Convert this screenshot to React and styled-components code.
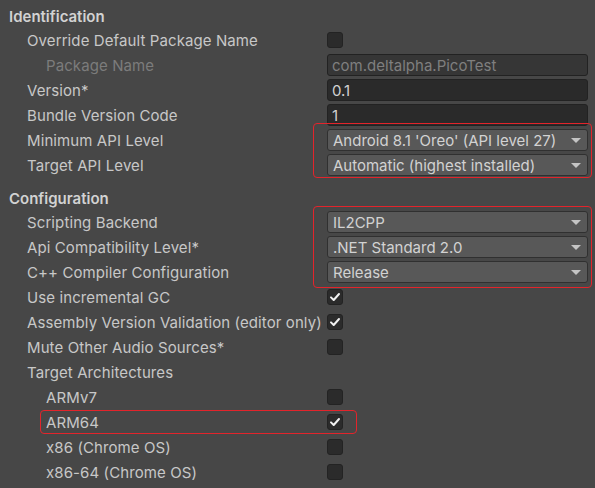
import styled, { createGlobalStyle } from "styled-components";

const GlobalStyle = createGlobalStyle`
  html, body {
    margin: 0;
    padding: 0;
    background: #474747;
  }
  body {
    font-family: Inter, "Noto Sans", "Liberation Sans", sans-serif;
    font-size: 15px;
    color: #c8c8c8;
  }
`;

const Page = styled.div`
  width: 595px;
  height: 488px;
  box-sizing: border-box;
  padding: 4px 7px 0 9px;
  overflow: hidden;
  display: flex;
  flex-direction: column;
  gap: 10px;
`;

const Section = styled.section`
  display: flex;
  flex-direction: column;
  gap: 3px;
`;

const Header = styled.div`
  height: 22px;
  box-sizing: border-box;
  padding-top: 2px;
  display: flex;
  align-items: center;
  font-weight: 600;
  color: #d2d2d2;
`;

const Row = styled.div`
  height: 22px;
  display: grid;
  grid-template-columns: 318px 1fr;
  align-items: center;
`;

const Label = styled.div`
  padding-left: ${(p) => 18 + (p.$level || 0) * 19}px;
  color: ${(p) => (p.$disabled ? "#7c7c7c" : "#c8c8c8")};
  letter-spacing: 0.1px;
  white-space: nowrap;
`;

const Group = styled.div`
  position: relative;
  display: flex;
  flex-direction: column;
  gap: 3px;

  &::after {
    content: "";
    position: absolute;
    pointer-events: none;
    left: ${(p) => p.$left}px;
    right: ${(p) => p.$right}px;
    top: ${(p) => p.$top}px;
    bottom: ${(p) => p.$bottom}px;
    border: 1px solid #e3242b;
    border-radius: 4px;
  }
`;

const Field = styled.div`
  height: 22px;
  box-sizing: border-box;
  border: 1px solid #222;
  border-radius: 3px;
  background: ${(p) => (p.$disabled ? "#363636" : "#2a2a2a")};
  color: ${(p) => (p.$disabled ? "#7f7f7f" : "#d2d2d2")};
  padding: 0 4px;
  display: flex;
  align-items: center;
`;

const Select = styled.div`
  height: 22px;
  box-sizing: border-box;
  border: 1px solid #303030;
  border-radius: 3px;
  background: #585858;
  color: #d2d2d2;
  padding: 0 5px 0 5px;
  display: flex;
  align-items: center;
  justify-content: space-between;
`;

const Arrow = styled.span`
  width: 0;
  height: 0;
  margin-right: 1px;
  border-left: 5px solid transparent;
  border-right: 5px solid transparent;
  border-top: 5px solid #c4c4c4;
`;

const Box = styled.div`
  width: 16px;
  height: 16px;
  box-sizing: border-box;
  border: 1px solid #232323;
  border-radius: 3px;
  background: #2b2b2b;
  display: flex;
  align-items: center;
  justify-content: center;
`;

const Check = ({ on }) => (
  <Box>
    {on && (
      <svg width="12" height="12" viewBox="0 0 12 12">
        <path
          d="M2 6.4 L4.7 9 L10 3"
          fill="none"
          stroke="#f0f0f0"
          strokeWidth="2"
          strokeLinecap="round"
          strokeLinejoin="round"
        />
      </svg>
    )}
  </Box>
);

const Dropdown = ({ value }) => (
  <Select>
    <span>{value}</span>
    <Arrow />
  </Select>
);

const CheckRow = ({ label, on, level }) => (
  <Row>
    <Label $level={level}>{label}</Label>
    <Check on={on} />
  </Row>
);

export default function App() {
  return (
    <>
      <GlobalStyle />
      <Page>
        <Section>
          <Header>Identification</Header>
          <CheckRow label="Override Default Package Name" />
          <Row>
            <Label $level={1} $disabled>
              Package Name
            </Label>
            <Field $disabled>com.deltalpha.PicoTest</Field>
          </Row>
          <Row>
            <Label>Version*</Label>
            <Field>0.1</Field>
          </Row>
          <Row>
            <Label>Bundle Version Code</Label>
            <Field>1</Field>
          </Row>
          <Group $left={304} $right={-4} $top={-6} $bottom={-2}>
            <Row>
              <Label>Minimum API Level</Label>
              <Dropdown value="Android 8.1 'Oreo' (API level 27)" />
            </Row>
            <Row>
              <Label>Target API Level</Label>
              <Dropdown value="Automatic (highest installed)" />
            </Row>
          </Group>
        </Section>
        <Section>
          <Header>Configuration</Header>
          <Group $left={304} $right={-4} $top={-5} $bottom={-5}>
            <Row>
              <Label>Scripting Backend</Label>
              <Dropdown value="IL2CPP" />
            </Row>
            <Row>
              <Label>Api Compatibility Level*</Label>
              <Dropdown value=".NET Standard 2.0" />
            </Row>
            <Row>
              <Label>C++ Compiler Configuration</Label>
              <Dropdown value="Release" />
            </Row>
          </Group>
          <CheckRow label="Use incremental GC" on />
          <CheckRow label="Assembly Version Validation (editor only)" on />
          <CheckRow label="Mute Other Audio Sources*" />
          <Row>
            <Label>Target Architectures</Label>
          </Row>
          <CheckRow label="ARMv7" level={1} />
          <Group $left={31} $right={231} $top={-1} $bottom={-1}>
            <CheckRow label="ARM64" level={1} on />
          </Group>
          <CheckRow label="x86 (Chrome OS)" level={1} />
          <CheckRow label="x86-64 (Chrome OS)" level={1} />
        </Section>
      </Page>
    </>
  );
}
